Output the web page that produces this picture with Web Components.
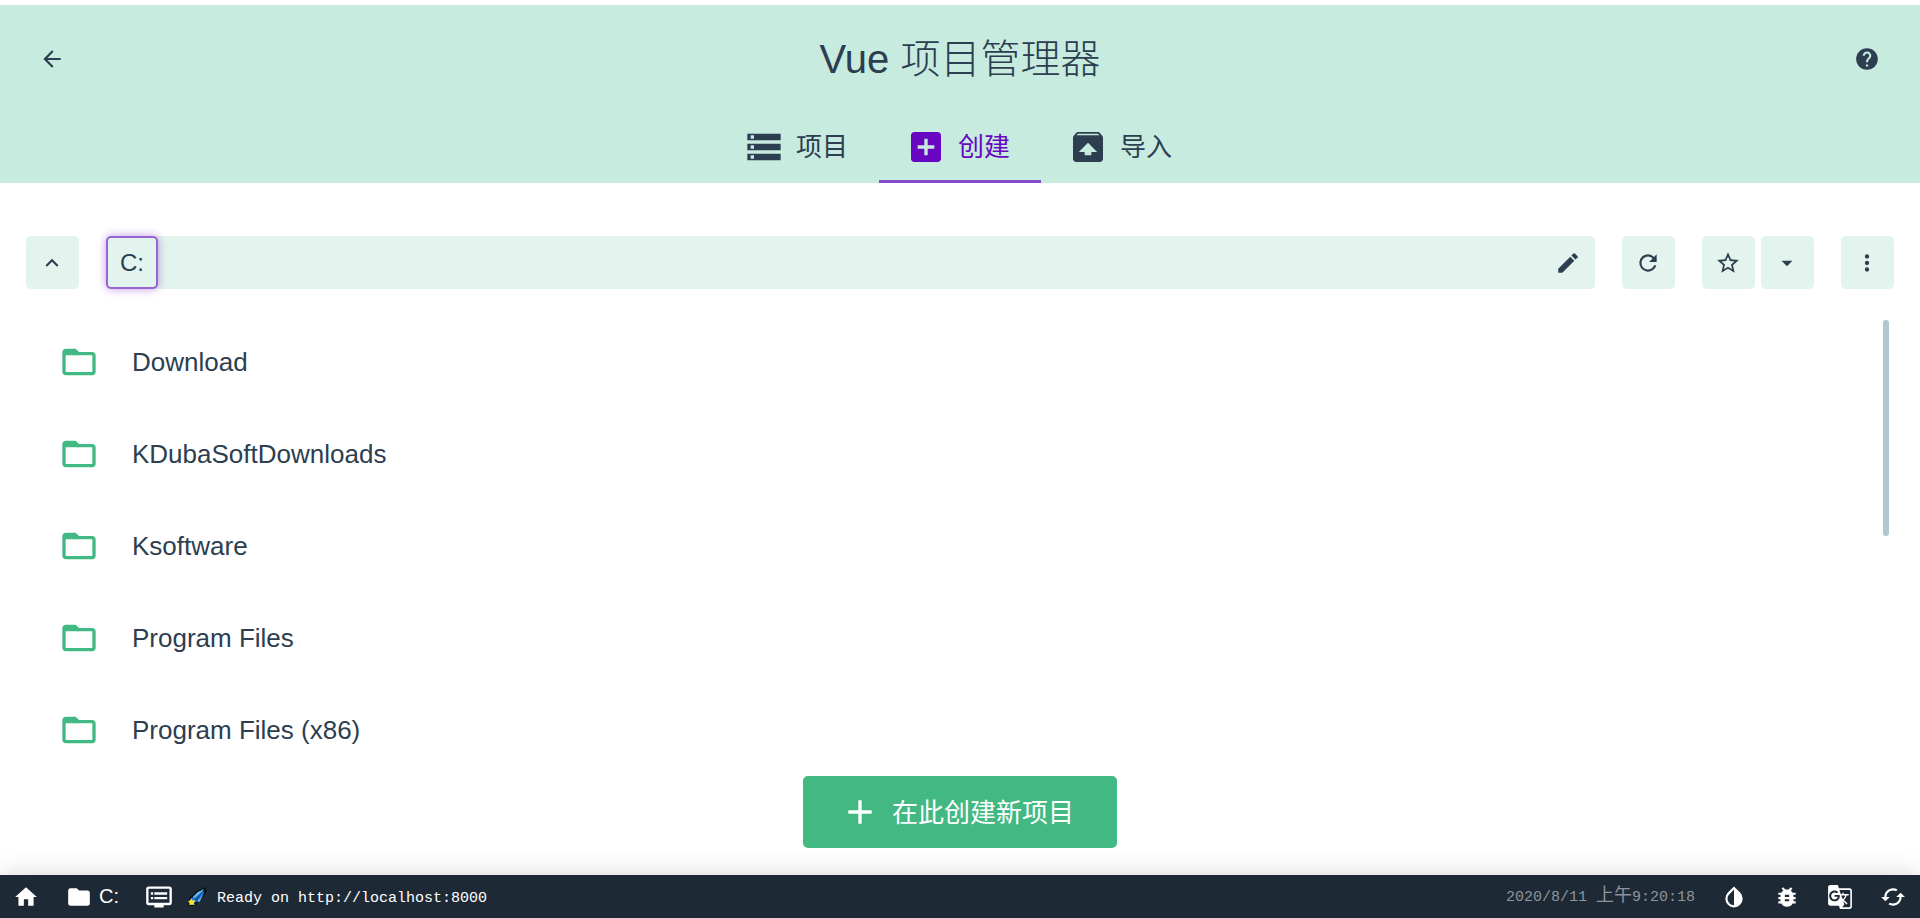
<!DOCTYPE html>
<html lang="zh-CN">
<head>
<meta charset="utf-8">
<title>Vue 项目管理器</title>
<style>
  html, body {
    height: 100%;
  }
  body {
    margin: 0;
    background-color: white;
    color: #2c3e50;
    font-family: "Liberation Sans", "Noto Sans CJK SC", sans-serif;
  }
</style>
</head>
<body>
<project-manager></project-manager>

<script>
// material icon shapes on a 24 x 24 grid
const icons = {
  back: '<path d="M20 11H7.83l5.59-5.59L12 4l-8 8 8 8 1.41-1.41L7.83 13H20v-2z"/>',
  help: '<path d="M12 2C6.48 2 2 6.48 2 12s4.48 10 10 10 10-4.48 10-10S17.52 2 12 2zm1 17h-2v-2h2v2zm2.07-7.75l-.9.92C13.45 12.9 13 13.5 13 15h-2v-.5c0-1.1.45-2.1 1.17-2.83l1.24-1.26c.37-.36.59-.86.59-1.41 0-1.1-.9-2-2-2s-2 .9-2 2H8c0-2.21 1.79-4 4-4s4 1.79 4 4c0 .88-.36 1.68-.93 2.25z"/>',
  storage: '<path d="M2 20h20v-4H2v4zm2-3h2v2H4v-2zM2 4v4h20V4H2zm4 3H4V5h2v2zm-4 7h20v-4H2v4zm2-3h2v2H4v-2z"/>',
  add_box: '<path d="M19 3H5c-1.11 0-2 .9-2 2v14c0 1.1.89 2 2 2h14c1.1 0 2-.9 2-2V5c0-1.1-.9-2-2-2zm-2 10h-4v4h-2v-4H7v-2h4V7h2v4h4v2z"/>',
  unarchive: '<path d="M20.55 5.22l-1.39-1.68C18.88 3.21 18.47 3 18 3H6c-.47 0-.88.21-1.15.55L3.46 5.22C3.17 5.57 3 6.01 3 6.5V19c0 1.1.89 2 2 2h14c1.1 0 2-.9 2-2V6.5c0-.49-.17-.93-.45-1.28zM12 9.5l5.5 5.5H14v2h-4v-2H6.5L12 9.5zM5.12 5l.82-1h12l.93 1H5.12z"/>',
  up: '<path d="M7.41 15.41L12 10.83l4.59 4.58L18 14l-6-6-6 6z"/>',
  edit: '<path d="M3 17.25V21h3.75L17.81 9.94l-3.75-3.75L3 17.25zM20.71 7.04a.996.996 0 0 0 0-1.41l-2.34-2.34a.996.996 0 0 0-1.41 0l-1.83 1.83 3.75 3.75 1.83-1.83z"/>',
  refresh: '<path d="M17.65 6.35A7.958 7.958 0 0 0 12 4a8 8 0 1 0 7.73 10h-2.08A6 6 0 1 1 12 6c1.66 0 3.14.69 4.22 1.78L13 11h7V4l-2.35 2.35z"/>',
  star: '<path d="M22 9.24l-7.19-.62L12 2 9.19 8.63 2 9.24l5.46 4.73L5.82 21 12 17.27 18.18 21l-1.63-7.03L22 9.24zM12 15.4l-3.76 2.27 1-4.28-3.32-2.88 4.38-.38L12 6.1l1.71 4.04 4.38.38-3.32 2.88 1 4.28L12 15.4z"/>',
  drop: '<path d="M7 10l5 5 5-5z"/>',
  more: '<path d="M12 8a2 2 0 1 0 0-4 2 2 0 0 0 0 4zm0 2a2 2 0 1 0 0 4 2 2 0 0 0 0-4zm0 6a2 2 0 1 0 0 4 2 2 0 0 0 0-4z"/>',
  folder_open: '<path d="M9.17 6l2 2H20v10H4V6h5.17M10 4H4c-1.1 0-1.99.9-1.99 2L2 18c0 1.1.9 2 2 2h16c1.1 0 2-.9 2-2V8c0-1.1-.9-2-2-2h-8l-2-2z"/><path d="M3 5h7l2 3H3z"/>',
  add: '<path d="M19 13h-6v6h-2v-6H5v-2h6V5h2v6h6v2z"/>',
  home: '<path d="M10 20v-6h4v6h5v-8h3L12 3 2 12h3v8z"/>',
  folder: '<path d="M10 4H4c-1.1 0-1.99.9-1.99 2L2 18c0 1.1.9 2 2 2h16c1.1 0 2-.9 2-2V8c0-1.1-.9-2-2-2h-8l-2-2z"/>',
  log: '<path d="M21 3H3c-1.1 0-2 .9-2 2v12c0 1.1.9 2 2 2h5v2h8v-2h5c1.1 0 1.99-.9 1.99-2L23 5c0-1.1-.9-2-2-2zm0 14H3V5h18v12zm-2-9H8v2h11V8zm0 4H8v2h11v-2zM7 8H5v2h2V8zm0 4H5v2h2v-2z"/>',
  comet: '<path fill="#1f7fd6" stroke="#05080c" stroke-width="1.5" stroke-linejoin="round" d="M3 15l9-9 4-2 6-3-2 4 3-1-5 8-7 7-4 3H3l-1-3z"/><path fill="#63b8f2" d="M7 12l6-6 8-4-9 9-3 2zM12 17l8-9-5 10z"/><path fill="#174f9b" d="M9 15L20 4l-7 11-3 2z"/><path fill="#ffe02b" d="M5 13l1 3 4 0-2 3 1 3-3-1-3 1 0-3-2-2 3-1z"/>',
  invert: '<path d="M17.66 7.93L12 2.27 6.34 7.93a8.003 8.003 0 0 0 0 11.31A7.98 7.98 0 0 0 12 21.58a7.98 7.98 0 0 0 5.66-2.34 8.003 8.003 0 0 0 0-11.31zM12 19.59c-1.6 0-3.11-.62-4.24-1.76A5.95 5.95 0 0 1 6 13.59c0-1.6.62-3.11 1.76-4.24L12 5.1v14.49z"/>',
  bug: '<path d="M20 8h-2.81a5.985 5.985 0 0 0-1.82-1.96L17 4.41 15.59 3l-2.17 2.17a6.002 6.002 0 0 0-2.83 0L8.41 3 7 4.41l1.62 1.63C7.88 6.55 7.26 7.22 6.81 8H4v2h2.09c-.05.33-.09.66-.09 1v1H4v2h2v1c0 .34.04.67.09 1H4v2h2.81a5.992 5.992 0 0 0 10.38 0H20v-2h-2.09c.05-.33.09-.66.09-1v-1h2v-2h-2v-1c0-.34-.04-.67-.09-1H20V8zm-6 8h-4v-2h4v2zm0-4h-4v-2h4v2z"/>',
  translate: '<path d="M21 4H11l-1-3H3c-1.1 0-2 .9-2 2v15c0 1.1.9 2 2 2h8l1 3h9c1.1 0 2-.9 2-2V6c0-1.1-.9-2-2-2zM7 16c-2.76 0-5-2.24-5-5s2.24-5 5-5c1.35 0 2.48.5 3.35 1.3L9.03 8.57c-.38-.36-1.04-.78-2.03-.78-1.74 0-3.15 1.44-3.15 3.21S5.26 14.21 7 14.21c2.01 0 2.84-1.44 2.92-2.41H7v-1.71h4.68c.07.31.12.61.12 1.02C11.8 13.97 9.89 16 7 16zm6.17-5.42h3.7c-.43 1.25-1.11 2.43-2.05 3.47-.31-.35-.6-.72-.86-1.1l-.79-2.37zm8.33 9.92c0 .55-.45 1-1 1H14l2-2.5-1.04-3.1 3.1 3.1.92-.92-3.3-3.25.02-.02c1.13-1.25 1.93-2.69 2.4-4.22H20v-1.3h-4.53V8h-1.29v1.29h-1.44L11.46 5.5h9.04c.55 0 1 .45 1 1v14z"/>',
  cached: '<path d="M19 8l-4 4h3c0 3.31-2.69 6-6 6a5.87 5.87 0 0 1-2.8-.7l-1.46 1.46A7.93 7.93 0 0 0 12 20c4.42 0 8-3.58 8-8h3l-4-4zM6 12c0-3.31 2.69-6 6-6 1.01 0 1.97.25 2.8.7l1.46-1.46A7.93 7.93 0 0 0 12 4c-4.42 0-8 3.58-8 8H1l4 4 4-4H6z"/>'
};

class UiIcon extends HTMLElement {
  connectedCallback() {
    if (this.shadowRoot) return;
    this.attachShadow({ mode: 'open' }).innerHTML = `
      <style>
        :host {
          display: block;
          flex: none;
          width: var(--icon-size, 26px);
          height: var(--icon-size, 26px);
        }
        svg {
          display: block;
          width: 100%;
          height: 100%;
          fill: currentColor;
        }
      </style>
      <svg viewBox="0 0 24 24" aria-hidden="true">${icons[this.getAttribute('name')]}</svg>
    `;
  }
}

// square button that only holds an icon
class IconButton extends HTMLElement {
  connectedCallback() {
    if (this.shadowRoot) return;
    this.attachShadow({ mode: 'open' }).innerHTML = `
      <style>
        :host {
          display: block;
          flex: none;
        }
        button {
          display: flex;
          align-items: center;
          justify-content: center;
          width: 53px;
          height: var(--button-height, 53px);
          padding: 0 1px 0 0;
          border: none;
          border-radius: 5px;
          background-color: var(--button-color, #e3f4ee);
          color: inherit;
          cursor: pointer;
        }
      </style>
      <button type="button" aria-label="${this.getAttribute('label')}">
        <ui-icon name="${this.getAttribute('icon')}"></ui-icon>
      </button>
    `;
  }
}

class NavTab extends HTMLElement {
  connectedCallback() {
    if (this.shadowRoot) return;
    this.attachShadow({ mode: 'open' }).innerHTML = `
      <style>
        :host {
          display: block;
        }
        a {
          --icon-size: 40px;
          display: flex;
          align-items: center;
          gap: 12px;
          box-sizing: border-box;
          height: 70px;
          padding: 1px 31px 0 27px;
          border-bottom: 3px solid transparent;
          color: #2c3e50;
          font-size: 26px;
          line-height: 40px;
          text-decoration: none;
        }
        :host([active]) a {
          color: #6806c1;
          border-bottom-color: #864bcb;
        }
      </style>
      <a href="#"><ui-icon name="${this.getAttribute('icon')}"></ui-icon><slot></slot></a>
    `;
  }
}

class TopBar extends HTMLElement {
  connectedCallback() {
    if (this.shadowRoot) return;
    this.attachShadow({ mode: 'open' }).innerHTML = `
      <style>
        :host {
          display: block;
          flex: none;
          margin-top: 5px;
          background-color: #c7ebdf;
        }
        .heading {
          --button-color: transparent;
          display: flex;
          align-items: center;
          justify-content: space-between;
          height: 108px;
          padding: 0 26px;
        }
        h1 {
          margin: 0;
          font-size: 40px;
          font-weight: 300;
          line-height: 60px;
        }
        nav {
          display: flex;
          justify-content: center;
        }
      </style>
      <div class="heading">
        <icon-button icon="back" label="返回"></icon-button>
        <h1><slot></slot></h1>
        <icon-button icon="help" label="帮助"></icon-button>
      </div>
      <nav>
        <nav-tab icon="storage">项目</nav-tab>
        <nav-tab icon="add_box" active>创建</nav-tab>
        <nav-tab icon="unarchive">导入</nav-tab>
      </nav>
    `;
  }
}

class PathBar extends HTMLElement {
  connectedCallback() {
    if (this.shadowRoot) return;
    this.attachShadow({ mode: 'open' }).innerHTML = `
      <style>
        :host {
          display: flex;
          flex: none;
          gap: 27px;
          padding: 53px 26px 27px;
        }
        .path {
          display: flex;
          flex: 1;
          justify-content: space-between;
          border-radius: 5px;
          background-color: #e3f4ee;
        }
        .part {
          width: 52px;
          height: 53px;
          padding: 0;
          border: 2px solid #9863d4;
          border-radius: 5px;
          background-color: #e3f4ee;
          box-shadow: 0 0 10px rgba(104, 6, 193, 0.4);
          color: #2c3e50;
          font: inherit;
          font-size: 24px;
        }
        .favorite {
          display: flex;
          gap: 6px;
        }
      </style>
      <icon-button icon="up" label="上级目录"></icon-button>
      <div class="path">
        <button type="button" class="part"><slot></slot></button>
        <icon-button icon="edit" label="编辑路径"></icon-button>
      </div>
      <icon-button icon="refresh" label="刷新"></icon-button>
      <div class="favorite">
        <icon-button icon="star" label="收藏"></icon-button>
        <icon-button icon="drop" label="收藏夹"></icon-button>
      </div>
      <icon-button icon="more" label="更多"></icon-button>
    `;
  }
}

class FolderItem extends HTMLElement {
  connectedCallback() {
    if (this.shadowRoot) return;
    this.attachShadow({ mode: 'open' }).innerHTML = `
      <style>
        :host {
          --icon-size: 40px;
          display: flex;
          align-items: center;
          gap: 33px;
          height: 92px;
          padding-left: 59px;
          font-size: 26px;
          cursor: pointer;
        }
        ui-icon {
          color: #42b983;
        }
      </style>
      <ui-icon name="folder_open"></ui-icon>
      <slot></slot>
    `;
  }
}

class FolderList extends HTMLElement {
  connectedCallback() {
    if (this.shadowRoot) return;
    this.attachShadow({ mode: 'open' }).innerHTML = `
      <style>
        :host {
          display: flex;
          flex: 1;
          min-height: 0;
          overflow: hidden;
        }
        .items {
          flex: 1;
        }
        .scroller {
          width: 6px;
          height: 47%;
          margin: 4px 31px 0 0;
          border-radius: 3px;
          background-color: #b1c7d0;
        }
      </style>
      <div class="items"><slot></slot></div>
      <div class="scroller"></div>
    `;
  }
}

class CreateButton extends HTMLElement {
  connectedCallback() {
    if (this.shadowRoot) return;
    this.attachShadow({ mode: 'open' }).innerHTML = `
      <style>
        :host {
          display: flex;
          flex: none;
          justify-content: center;
          padding-bottom: 27px;
        }
        button {
          --icon-size: 40px;
          display: flex;
          align-items: center;
          gap: 12px;
          height: 72px;
          padding: 0 43px 0 37px;
          border: none;
          border-radius: 5px;
          background-color: #42b983;
          color: white;
          font: inherit;
          font-size: 26px;
          cursor: pointer;
        }
        span {
          padding-bottom: 3px;
        }
      </style>
      <button type="button"><ui-icon name="add"></ui-icon><span><slot></slot></span></button>
    `;
  }
}

class StatusBar extends HTMLElement {
  connectedCallback() {
    if (this.shadowRoot) return;
    this.attachShadow({ mode: 'open' }).innerHTML = `
      <style>
        :host {
          --button-color: transparent;
          --button-height: 43px;
          display: flex;
          flex: none;
          align-items: center;
          justify-content: space-between;
          height: 43px;
          background-color: #1d2935;
          box-shadow: 0 0 26px rgba(0, 0, 0, 0.16);
          color: white;
        }
        .group, .cwd, .log {
          display: flex;
          align-items: center;
        }
        .cwd {
          gap: 7px;
          padding: 0 13px;
          font-size: 20px;
        }
        .log {
          gap: 10px;
          padding: 0 13px;
        }
        .log .screen {
          --icon-size: 28px;
          margin-right: 4px;
        }
        .log .comet {
          --icon-size: 20px;
        }
        .message, time {
          font-family: "Liberation Mono", "Noto Sans CJK SC", monospace;
          font-size: 15px;
          line-height: 18px;
        }
        .message {
          padding-top: 4px;
        }
        time {
          padding-right: 13px;
          color: #8e949a;
        }
        .noon {
          font-size: 18px;
        }
      </style>
      <div class="group">
        <icon-button icon="home" label="主页"></icon-button>
        <div class="cwd"><ui-icon name="folder"></ui-icon><span>C:</span></div>
        <div class="log">
          <ui-icon class="screen" name="log"></ui-icon>
          <ui-icon class="comet" name="comet"></ui-icon>
          <span class="message"><slot></slot></span>
        </div>
      </div>
      <div class="group">
        <time datetime="2020-08-11T09:20:18">2020/8/11 <span class="noon">上午</span>9:20:18</time>
        <icon-button icon="invert" label="切换主题"></icon-button>
        <icon-button icon="bug" label="报告问题"></icon-button>
        <icon-button icon="translate" label="翻译"></icon-button>
        <icon-button icon="cached" label="重置"></icon-button>
      </div>
    `;
  }
}

class ProjectManager extends HTMLElement {
  connectedCallback() {
    if (this.shadowRoot) return;
    this.attachShadow({ mode: 'open' }).innerHTML = `
      <style>
        :host {
          display: flex;
          flex-direction: column;
          height: 100%;
          overflow: hidden;
        }
      </style>
      <top-bar>Vue 项目管理器</top-bar>
      <path-bar>C:</path-bar>
      <folder-list>
        <folder-item>Download</folder-item>
        <folder-item>KDubaSoftDownloads</folder-item>
        <folder-item>Ksoftware</folder-item>
        <folder-item>Program Files</folder-item>
        <folder-item>Program Files (x86)</folder-item>
      </folder-list>
      <create-button>在此创建新项目</create-button>
      <status-bar>Ready on http://localhost:8000</status-bar>
    `;
  }
}

customElements.define('ui-icon', UiIcon);
customElements.define('icon-button', IconButton);
customElements.define('nav-tab', NavTab);
customElements.define('top-bar', TopBar);
customElements.define('path-bar', PathBar);
customElements.define('folder-item', FolderItem);
customElements.define('folder-list', FolderList);
customElements.define('create-button', CreateButton);
customElements.define('status-bar', StatusBar);
customElements.define('project-manager', ProjectManager);
</script>
</body>
</html>
